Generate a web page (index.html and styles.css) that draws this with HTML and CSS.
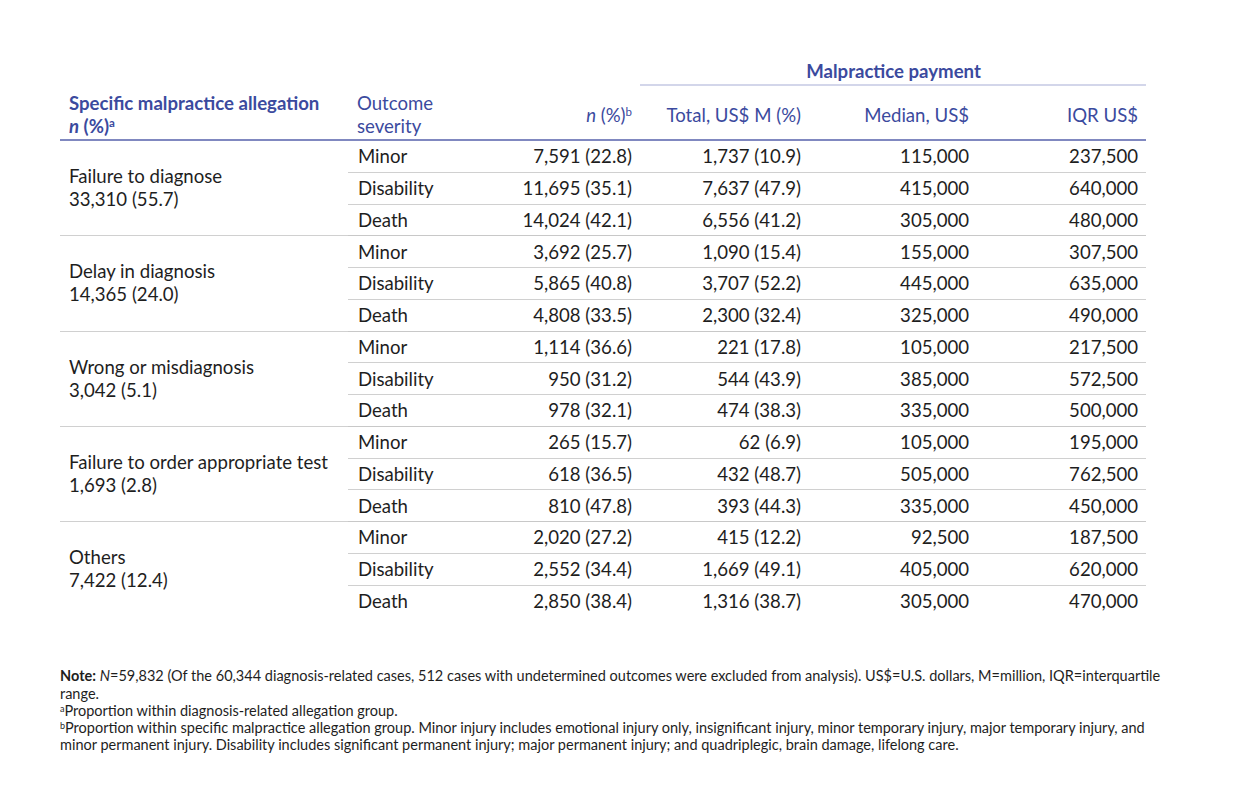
FILE: index.html
```html
<!DOCTYPE html>
<html>
<head>
<meta charset="utf-8">
<link rel="stylesheet" href="styles.css">
</head>
<body>
<div class="page">
  <table class="tbl">
    <colgroup>
      <col class="c1"><col class="c2"><col class="c3"><col class="c4"><col class="c5"><col class="c6">
    </colgroup>
    <thead>
      <tr class="h1">
        <th colspan="3" class="blank"></th>
        <th colspan="3" class="group">Malpractice payment</th>
      </tr>
      <tr class="h2">
        <th class="left bold">Specific malpractice allegation<br><i>n</i> (%)<sup>a</sup></th>
        <th class="left">Outcome<br>severity</th>
        <th class="num"><i>n</i> (%)<sup>b</sup></th>
        <th class="num">Total, US$ M (%)</th>
        <th class="num">Median, US$</th>
        <th class="num">IQR US$</th>
      </tr>
    </thead>
    <tbody>
      <tr class="first"><td rowspan="3" class="alleg">Failure to diagnose<br>33,310 (55.7)</td><td>Minor</td><td class="num">7,591 (22.8)</td><td class="num">1,737 (10.9)</td><td class="num">115,000</td><td class="num">237,500</td></tr>
      <tr><td>Disability</td><td class="num">11,695 (35.1)</td><td class="num">7,637 (47.9)</td><td class="num">415,000</td><td class="num">640,000</td></tr>
      <tr class="last"><td>Death</td><td class="num">14,024 (42.1)</td><td class="num">6,556 (41.2)</td><td class="num">305,000</td><td class="num">480,000</td></tr>

      <tr class="first"><td rowspan="3" class="alleg">Delay in diagnosis<br>14,365 (24.0)</td><td>Minor</td><td class="num">3,692 (25.7)</td><td class="num">1,090 (15.4)</td><td class="num">155,000</td><td class="num">307,500</td></tr>
      <tr><td>Disability</td><td class="num">5,865 (40.8)</td><td class="num">3,707 (52.2)</td><td class="num">445,000</td><td class="num">635,000</td></tr>
      <tr class="last"><td>Death</td><td class="num">4,808 (33.5)</td><td class="num">2,300 (32.4)</td><td class="num">325,000</td><td class="num">490,000</td></tr>

      <tr class="first"><td rowspan="3" class="alleg">Wrong or misdiagnosis<br>3,042 (5.1)</td><td>Minor</td><td class="num">1,114 (36.6)</td><td class="num">221 (17.8)</td><td class="num">105,000</td><td class="num">217,500</td></tr>
      <tr><td>Disability</td><td class="num">950 (31.2)</td><td class="num">544 (43.9)</td><td class="num">385,000</td><td class="num">572,500</td></tr>
      <tr class="last"><td>Death</td><td class="num">978 (32.1)</td><td class="num">474 (38.3)</td><td class="num">335,000</td><td class="num">500,000</td></tr>

      <tr class="first"><td rowspan="3" class="alleg">Failure to order appropriate test<br>1,693 (2.8)</td><td>Minor</td><td class="num">265 (15.7)</td><td class="num">62 (6.9)</td><td class="num">105,000</td><td class="num">195,000</td></tr>
      <tr><td>Disability</td><td class="num">618 (36.5)</td><td class="num">432 (48.7)</td><td class="num">505,000</td><td class="num">762,500</td></tr>
      <tr class="last"><td>Death</td><td class="num">810 (47.8)</td><td class="num">393 (44.3)</td><td class="num">335,000</td><td class="num">450,000</td></tr>

      <tr class="first"><td rowspan="3" class="alleg">Others<br>7,422 (12.4)</td><td>Minor</td><td class="num">2,020 (27.2)</td><td class="num">415 (12.2)</td><td class="num">92,500</td><td class="num">187,500</td></tr>
      <tr><td>Disability</td><td class="num">2,552 (34.4)</td><td class="num">1,669 (49.1)</td><td class="num">405,000</td><td class="num">620,000</td></tr>
      <tr class="last end"><td>Death</td><td class="num">2,850 (38.4)</td><td class="num">1,316 (38.7)</td><td class="num">305,000</td><td class="num">470,000</td></tr>
    </tbody>
  </table>

  <div class="notes">
    <p><b>Note:</b> <i>N</i>=59,832 (Of the 60,344 diagnosis-related cases, 512 cases with undetermined outcomes were excluded from analysis). US$=U.S. dollars, M=million, IQR=interquartile range.</p>
    <p><sup>a</sup>Proportion within diagnosis-related allegation group.</p>
    <p><sup>b</sup>Proportion within specific malpractice allegation group. Minor injury includes emotional injury only, insignificant injury, minor temporary injury, major temporary injury, and minor permanent injury. Disability includes significant permanent injury; major permanent injury; and quadriplegic, brain damage, lifelong care.</p>
  </div>
</div>
</body>
</html>
```

FILE: styles.css
```css
html, body {
  margin: 0;
  padding: 0;
  background: #ffffff;
}
body {
  font-family: Lato, "Open Sans", sans-serif;
  color: #1e1e1e;
}
.page {
  padding: 57px 0 0 60px;
  width: 1110px;
}
.tbl {
  border-collapse: collapse;
  width: 1086px;
  table-layout: fixed;
  font-size: 18.6px;
}
.c1 { width: 288px; }
.c2 { width: 120px; }
.c3 { width: 172px; }
.c4 { width: 169px; }
.c5 { width: 168px; }
.c6 { width: 169px; }

th {
  font-weight: normal;
  color: #3b4a9e;
  padding: 0 8px 0 9px;
}
th.bold { font-weight: bold; }
th.left { text-align: left; }
.num { text-align: right; }
.h1 th { height: 26px; vertical-align: top; }
.h1 th.group {
  font-weight: bold;
  text-align: center;
  border-bottom: 2px solid #d3d6ea;
  padding-top: 1px;
  height: 25px;
  line-height: 26px;
}
.h2 th {
  height: 47px;
  line-height: 23px;
  vertical-align: middle;
  border-bottom: 2px solid #8088c0;
  padding-top: 6px;
  padding-bottom: 0;
}
.h2 i { font-style: italic; }
sup {
  font-size: 62%;
  vertical-align: 0.5em;
  line-height: 0;
}
td {
  height: 30.75px;
  padding: 0 8px 0 10px;
  vertical-align: middle;
  border-bottom: 1px solid #d0d0d0;
  white-space: nowrap;
  line-height: 22px;
}
td.alleg {
  padding-left: 9px;
  line-height: 23px;
}
tr.last td { border-bottom: 1px solid #c8c8c8; }
tr.end td { border-bottom: none; }
tbody tr:nth-last-child(-n+3) td.alleg { border-bottom: none; }

.notes {
  margin-top: 51px;
  font-size: 14.5px;
  line-height: 17.3px;
  color: #1e1e1e;
  width: 1110px;
}
.notes p { margin: 0; }
.notes sup { font-size: 62%; vertical-align: 0.45em; line-height: 0; }
```
